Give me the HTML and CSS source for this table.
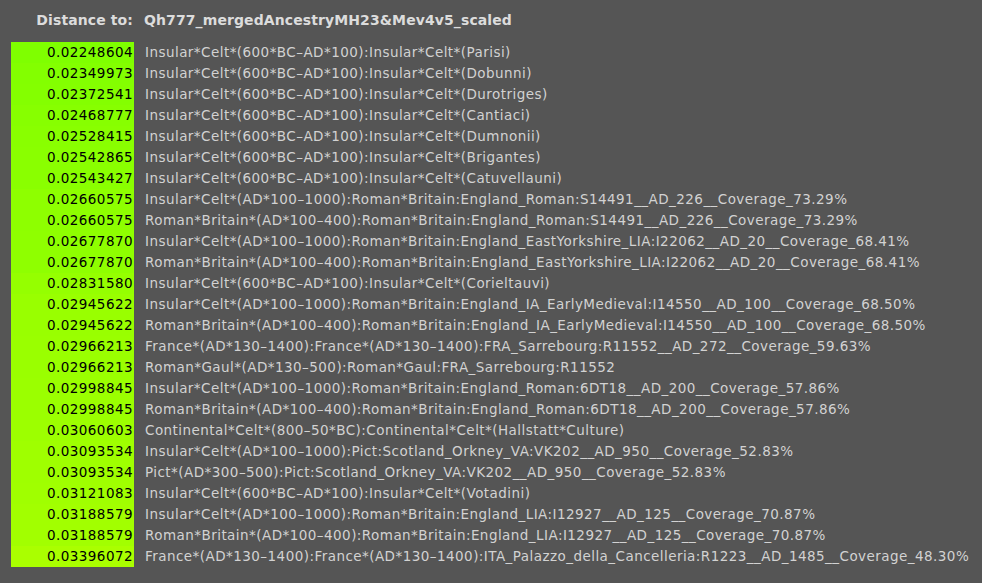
FILE: index.html
```html
<!DOCTYPE html>
<html>
<head>
<meta charset="utf-8">
<link rel="stylesheet" href="styles.css">
</head>
<body>
<div class="panel">
  <div class="head">
    <span class="head-label">Distance to:</span>
    <span class="head-name">Qh777_mergedAncestryMH23&amp;Mev4v5_scaled</span>
  </div>
  <div class="rows">
    <div class="row"><span class="dist" style="background:rgb(127,255,0)">0.02248604</span><span class="name">Insular*Celt*(600*BC–AD*100):Insular*Celt*(Parisi)</span></div>
    <div class="row"><span class="dist" style="background:rgb(131,255,0)">0.02349973</span><span class="name">Insular*Celt*(600*BC–AD*100):Insular*Celt*(Dobunni)</span></div>
    <div class="row"><span class="dist" style="background:rgb(132,255,0)">0.02372541</span><span class="name">Insular*Celt*(600*BC–AD*100):Insular*Celt*(Durotriges)</span></div>
    <div class="row"><span class="dist" style="background:rgb(135,255,0)">0.02468777</span><span class="name">Insular*Celt*(600*BC–AD*100):Insular*Celt*(Cantiaci)</span></div>
    <div class="row"><span class="dist" style="background:rgb(137,255,0)">0.02528415</span><span class="name">Insular*Celt*(600*BC–AD*100):Insular*Celt*(Dumnonii)</span></div>
    <div class="row"><span class="dist" style="background:rgb(138,255,0)">0.02542865</span><span class="name">Insular*Celt*(600*BC–AD*100):Insular*Celt*(Brigantes)</span></div>
    <div class="row"><span class="dist" style="background:rgb(138,255,0)">0.02543427</span><span class="name">Insular*Celt*(600*BC–AD*100):Insular*Celt*(Catuvellauni)</span></div>
    <div class="row"><span class="dist" style="background:rgb(142,255,0)">0.02660575</span><span class="name">Insular*Celt*(AD*100–1000):Roman*Britain:England_Roman:S14491__AD_226__Coverage_73.29%</span></div>
    <div class="row"><span class="dist" style="background:rgb(142,255,0)">0.02660575</span><span class="name">Roman*Britain*(AD*100–400):Roman*Britain:England_Roman:S14491__AD_226__Coverage_73.29%</span></div>
    <div class="row"><span class="dist" style="background:rgb(143,255,0)">0.02677870</span><span class="name">Insular*Celt*(AD*100–1000):Roman*Britain:England_EastYorkshire_LIA:I22062__AD_20__Coverage_68.41%</span></div>
    <div class="row"><span class="dist" style="background:rgb(143,255,0)">0.02677870</span><span class="name">Roman*Britain*(AD*100–400):Roman*Britain:England_EastYorkshire_LIA:I22062__AD_20__Coverage_68.41%</span></div>
    <div class="row"><span class="dist" style="background:rgb(149,255,0)">0.02831580</span><span class="name">Insular*Celt*(600*BC–AD*100):Insular*Celt*(Corieltauvi)</span></div>
    <div class="row"><span class="dist" style="background:rgb(153,255,0)">0.02945622</span><span class="name">Insular*Celt*(AD*100–1000):Roman*Britain:England_IA_EarlyMedieval:I14550__AD_100__Coverage_68.50%</span></div>
    <div class="row"><span class="dist" style="background:rgb(153,255,0)">0.02945622</span><span class="name">Roman*Britain*(AD*100–400):Roman*Britain:England_IA_EarlyMedieval:I14550__AD_100__Coverage_68.50%</span></div>
    <div class="row"><span class="dist" style="background:rgb(154,255,0)">0.02966213</span><span class="name">France*(AD*130–1400):France*(AD*130–1400):FRA_Sarrebourg:R11552__AD_272__Coverage_59.63%</span></div>
    <div class="row"><span class="dist" style="background:rgb(154,255,0)">0.02966213</span><span class="name">Roman*Gaul*(AD*130–500):Roman*Gaul:FRA_Sarrebourg:R11552</span></div>
    <div class="row"><span class="dist" style="background:rgb(155,255,0)">0.02998845</span><span class="name">Insular*Celt*(AD*100–1000):Roman*Britain:England_Roman:6DT18__AD_200__Coverage_57.86%</span></div>
    <div class="row"><span class="dist" style="background:rgb(155,255,0)">0.02998845</span><span class="name">Roman*Britain*(AD*100–400):Roman*Britain:England_Roman:6DT18__AD_200__Coverage_57.86%</span></div>
    <div class="row"><span class="dist" style="background:rgb(157,255,0)">0.03060603</span><span class="name">Continental*Celt*(800–50*BC):Continental*Celt*(Hallstatt*Culture)</span></div>
    <div class="row"><span class="dist" style="background:rgb(159,255,0)">0.03093534</span><span class="name">Insular*Celt*(AD*100–1000):Pict:Scotland_Orkney_VA:VK202__AD_950__Coverage_52.83%</span></div>
    <div class="row"><span class="dist" style="background:rgb(159,255,0)">0.03093534</span><span class="name">Pict*(AD*300–500):Pict:Scotland_Orkney_VA:VK202__AD_950__Coverage_52.83%</span></div>
    <div class="row"><span class="dist" style="background:rgb(160,255,0)">0.03121083</span><span class="name">Insular*Celt*(600*BC–AD*100):Insular*Celt*(Votadini)</span></div>
    <div class="row"><span class="dist" style="background:rgb(162,255,0)">0.03188579</span><span class="name">Insular*Celt*(AD*100–1000):Roman*Britain:England_LIA:I12927__AD_125__Coverage_70.87%</span></div>
    <div class="row"><span class="dist" style="background:rgb(162,255,0)">0.03188579</span><span class="name">Roman*Britain*(AD*100–400):Roman*Britain:England_LIA:I12927__AD_125__Coverage_70.87%</span></div>
    <div class="row"><span class="dist" style="background:rgb(170,255,0)">0.03396072</span><span class="name">France*(AD*130–1400):France*(AD*130–1400):ITA_Palazzo_della_Cancelleria:R1223__AD_1485__Coverage_48.30%</span></div>
  </div>
</div>
</body>
</html>
```

FILE: styles.css
```css
html, body {
  margin: 0;
  padding: 0;
  background: #555555;
}

body {
  font-family: "DejaVu Sans", "Liberation Sans", sans-serif;
  font-size: 13.5px;
  color: #d2d2d2;
}

.panel {
  padding: 8px 0 0 11px;
}

.head {
  display: flex;
  height: 24px;
  line-height: 24px;
  margin-bottom: 10px;
  font-size: 14px;
  font-weight: 700;
  color: #dcdcdc;
  letter-spacing: 0.1px;
  white-space: nowrap;
}

.head-label {
  width: 123px;
  box-sizing: border-box;
  text-align: right;
  padding-right: 1px;
}

.head-name {
  padding-left: 10px;
}

.rows {
  display: flex;
  flex-direction: column;
}

.row {
  display: flex;
  height: 21px;
  line-height: 21px;
  letter-spacing: 0.45px;
  white-space: nowrap;
}

.dist {
  flex: 0 0 123px;
  box-sizing: border-box;
  padding-right: 1px;
  text-align: right;
  color: #000;
}

.name {
  padding-left: 11px;
  color: #d2d2d2;
}
```
